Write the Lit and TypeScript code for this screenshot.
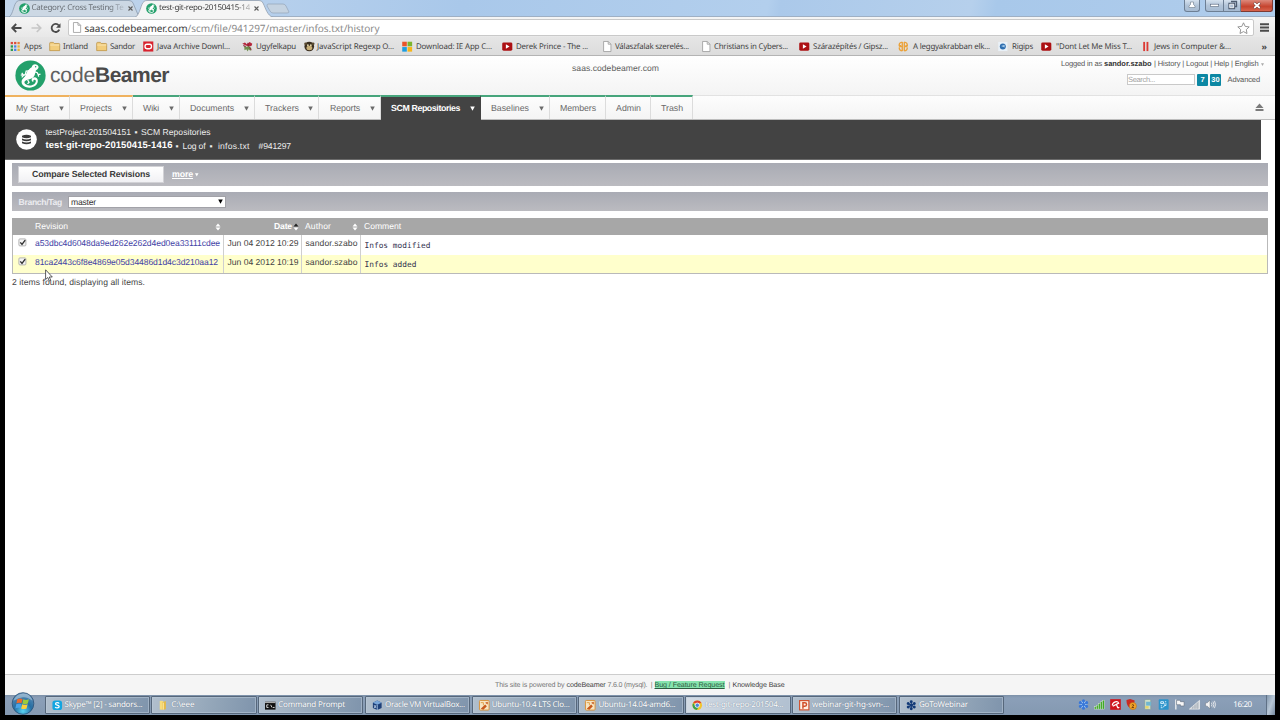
import { LitElement, html, css, svg, nothing } from "lit";
import { customElement, property } from "lit/decorators.js";

/** A label that spreads its letters over a given width, after a given lead. */
@customElement("fit-label")
class FitLabel extends LitElement {
  @property({ type: Number }) w = 0;
  @property({ type: Number }) lead = 0;
  @property() text = "";
  static styles = css`
    :host { display: block; flex: none; white-space: pre; text-rendering: geometricPrecision; }
    span { display: inline-block; text-decoration: inherit; }
  `;
  render() {
    return html`<span>${this.text}</span>`;
  }
  updated() {
    const s = this.renderRoot.querySelector("span") as HTMLElement;
    s.style.letterSpacing = "0px";
    this.style.marginLeft = `${this.lead}px`;
    if (this.w) {
      const width = s.getBoundingClientRect().width;
      s.style.letterSpacing = `${(this.w - width) / this.text.length}px`;
      this.style.width = `${this.w}px`;
    }
  }
}

const t = (lead: number, text: string, w: number, cls = "") =>
  html`<fit-label class=${cls} .lead=${lead} .text=${text} .w=${w}></fit-label>`;

const icon = (w: number, h: number, vb: string, body: unknown, cls = "") =>
  html`<svg class="ic ${cls}" width=${w} height=${h} viewBox=${vb}>${body}</svg>`;

const lizard = svg`
  <circle cx="16" cy="16" r="15.600" fill="#23a06b"/>
  <path d="M17.200 7.500C17.800 4.800 20.500 3.600 23 5.200c1.700 1.100 1.700 3 .4 4.200-1.200 1.100-2.200 1.500-2.400 3.200-.3 2.700-1.200 4.800-3.600 6.300-2.200 1.300-4.900 1.500-6.600 2.400-1.600.9-1.300 2.600.3 3.700 2.600 1.800 6.700 1.600 9.200-.6 1.700-1.600 1.600-3.600.2-3.900-1.300-.2-2 1-1.500 2.300-2.200-.5-2.400-3.400-.6-4.500 2.400-1.400 5.200.1 5.200 3.200 0 4.200-4.200 7.200-8.800 7.100-4.200-.1-8-2.600-8-5.900 0-3.200 2.600-4.300 3.700-6.200 1.500-2.700 2.200-6.100 6.700-9z" fill="#fff"/>
  <path d="M14.500 11.200l-3 .3-.8 3.200-1.800 1.200M8.900 15.900l-2.900-.6M8.900 15.900l-2 2M8.800 15.600L7 13.200M20 12l3 1.200 1 2M24 15.200l2.300-.6M24 15.200l.4 2M13 20.500l1.500 2.500-1.600 1.600" fill="none" stroke="#fff" stroke-width="1.300"/>
  <circle cx="21.300" cy="6.900" r=".8" fill="#23a06b"/>`;

const pageIcon = svg`<path d="M1.500.5h5l3 3v8h-8z" fill="#fff" stroke="#9b9b9b" stroke-width=".9"/><path d="M6.500.5v3h3" fill="none" stroke="#9b9b9b" stroke-width=".9"/>`;
const yt = svg`<rect y="1.500" width="11" height="9" rx="1.500" fill="#ac1013"/><path d="M4 3.600v4.800l4-2.400z" fill="#fff"/>`;
const folder = svg`<path d="M.5 2.500q0-1 1-1h3l1 1.200h5q.9 0 .9.900v6.900h-10.900z" fill="#f2cd7c" stroke="#b98f3f" stroke-width=".8"/><path d="M1 4.400h10" stroke="#fbe7b5"/>`;
const dots = ["#dd4b39", "#dd4b39", "#e8803a", "#2f9a4c", "#4b82e8", "#e8b33a", "#2f9a4c", "#4b82e8", "#e8b33a"];

const bookmarkIcons: Record<string, unknown> = {
  apps: dots.map((c, i) => svg`<rect x=${0.5 + (i % 3) * 3.7} y=${1 + Math.floor(i / 3) * 3.7} width="2.500" height="2.500" fill=${c}/>`),
  folder,
  java: svg`<rect y=".5" width="11" height="11" fill="#d8232f"/><rect x="2" y="3.600" width="7" height="4.800" rx="2" fill="none" stroke="#fff" stroke-width="1.500"/>`,
  ugyfel: svg`<path d="M0 3l3-1.500 2 2 3-2.500 3 2-1 2.500-3 .5-3-1z" fill="#b5283d"/><path d="M2 4.500l2 2 3-1 3 2-1 3.500-2-2-1 2.500-1.500-2.500-2 1z" fill="#6f8f4e"/><path d="M1 5l3 1M6 2l1 4M8 7l2 3" stroke="#8d1f3a"/>`,
  monkey: svg`<circle cx="5.500" cy="6" r="5.300" fill="#3b2f20"/><circle cx="1.500" cy="3" r="1.500" fill="#5a4a30"/><circle cx="9.700" cy="3" r="1.500" fill="#5a4a30"/><ellipse cx="5.600" cy="7.600" rx="3.200" ry="2.400" fill="#c9b078"/><circle cx="4" cy="4.500" r="1" fill="#e8dcae"/><circle cx="7.200" cy="4.500" r="1" fill="#e8dcae"/>`,
  ms: svg`<rect y=".8" width="5" height="5" fill="#e8542a"/><rect x="5.800" y=".8" width="5" height="5" fill="#7cb52c"/><rect y="6.600" width="5" height="5" fill="#1c9de0"/><rect x="5.800" y="6.600" width="5" height="5" fill="#f7b517"/>`,
  yt,
  page: pageIcon,
  orange: svg`<path d="M4.500 1.200C1.500 1.500.9 3 1.100 5h2M6.500 1.200C9.500 1.500 10 3 9.900 5h-2M1.100 7c0 2.500 1.400 3.700 3.400 3.700M9.900 7c0 2.500-1.400 3.700-3.400 3.700M4.400 1v10M6.600 1v10M1 6h3M7 6h3" fill="none" stroke="#eba23a" stroke-width="1.500"/>`,
  rigips: svg`<rect y="1" width="10" height="10" fill="#e9f1f8"/><circle cx="5" cy="6" r="3.300" fill="#2f6fb0"/><path d="M3 5.500l4-1.500v3z" fill="#a9cdea"/>`,
  bars: svg`<rect x="0" y="1" width="2" height="10" fill="#dc3a34"/><rect x="3.600" y="1" width="2" height="10" fill="#dc3a34"/>`,
};

// icon, icon x, label, label x, label width
const bookmarks: [string, number, string, number, number][] = [
  ["apps", 10, "Apps", 24, 18], ["folder", 49, "Intland", 63, 25], ["folder", 96, "Sandor", 110, 25],
  ["java", 143, "Java Archive Downl...", 157, 73], ["ugyfel", 242, "Ugyfelkapu", 256, 40],
  ["monkey", 304, "JavaScript Regexp O...", 317, 77], ["ms", 402, "Download: IE App C...", 416, 76],
  ["yt", 502, "Derek Prince - The ...", 516, 72], ["page", 602, "Válaszfalak szerelés...", 615, 74],
  ["page", 701, "Christians in Cybers...", 714, 74], ["yt", 799, "Szárazépítés / Gipsz...", 813, 75],
  ["orange", 898, "A leggyakrabban elk...", 913, 77], ["rigips", 998, "Rigips", 1012, 21],
  ["yt", 1041, "\"Dont Let Me Miss T...", 1056, 76], ["bars", 1143, "Jews in Computer &...", 1154, 77],
];

// label, width of tab, label lead, label width, has menu, colour of top line
const tabs: [string, number, number, number, boolean, string][] = [
  ["My Start", 65, 11, 33, true, "orange"], ["Projects", 63, 10, 32, true, "orange"],
  ["Wiki", 47, 10, 16, true, "green"], ["Documents", 75, 10, 44, true, "green"],
  ["Trackers", 64, 10, 34, true, "green"], ["Reports", 62, 11, 30, true, "green"],
  ["SCM Repositories", 100, 10, 69, true, "on"], ["Baselines", 69, 10, 38, true, "green"],
  ["Members", 56, 10, 36, false, "green"], ["Admin", 45, 10, 25, false, "green"], ["Trash", 42, 10, 22, false, "green"],
];

const vbox = svg`<path d="M6 .5l5 2.500v6L6 11.500 1 9V3z" fill="#1d3f78"/><path d="M1 3l5 2.500L11 3 6 .5z" fill="#7aa6d8"/><path d="M6 5.500v6" stroke="#a9c6e6"/><path d="M2.500 6l2 3M4.500 6l-2 3" stroke="#c9dcf0"/>`;
const vm = svg`<rect x=".5" y=".5" width="11" height="11" rx="1" fill="#f6e5c4" stroke="#d98b2b"/><path d="M2 10l5-5 2 2-4 4zM7 3l3-1v3z" fill="#c8591c"/><path d="M2 3h3v3" stroke="#e09a3c" fill="none"/>`;
const flower = (c: string) => svg`${[0, 60, 120, 180, 240, 300].map((a) => svg`<g transform="rotate(${a} 6 6)"><path d="M6 6V2.500" stroke=${c} stroke-width="1.200"/><circle cx="6" cy="2" r="1.700" fill=${c}/></g>`)}<circle cx="6" cy="6" r="1.700" fill=${c}/>`;
const tasks: [unknown, string, number, string][] = [
  [svg`<rect x=".5" y=".5" width="11" height="11" rx="3" fill="#12a5e0"/><path d="M8.300 4C7.500 2.800 4 2.600 4 4.500 4 6.400 8.200 5.300 8.200 7.500 8.200 9.600 4.500 9.400 3.600 8" fill="none" stroke="#fff" stroke-width="1.400"/>`, "Skype™ [2] - sandors...", 78, ""],
  [svg`<path d="M2 1h4v10H2z" fill="#f7dc7b"/><path d="M5 2.500l4-1.500v9.500L5 11z" fill="#e6bb45"/><path d="M6 3v8" stroke="#fff3c0"/>`, "C:\\eee", 23, ""],
  [svg`<rect y="2" width="12" height="9" fill="#111"/><rect y="2" width="12" height="1.500" fill="#aaa"/><path d="M4 5.500H2v3h2M5 6v.1M5 8v.1M6.500 5.500l1.500 3M9 8.500h2" stroke="#eee" fill="none"/>`, "Command Prompt", 67, ""],
  [vbox, "Oracle VM VirtualBox...", 80, ""],
  [vm, "Ubuntu-10.4 LTS Clo...", 78, ""],
  [vm, "Ubuntu-14.04-amd6...", 77, ""],
  [svg`<circle cx="6" cy="6" r="5.500" fill="#f2c52e"/><path d="M1.200 3.300A5.500 5.500 0 0 1 10.800 3.300L6 4z" fill="#dd4436"/><path d="M1.200 3.300A5.500 5.500 0 0 0 5.500 11.500L7.500 8 4 7z" fill="#3a9f4c"/><circle cx="6" cy="6" r="2.500" fill="#4a86e0" stroke="#fff" stroke-width=".9"/>`, "test-git-repo-201504...", 78, "active"],
  [svg`<rect x=".7" y=".7" width="10.600" height="10.600" fill="#fdf0e4" stroke="#d2502a" stroke-width="1.300"/><path d="M4.500 10V3.200h2.200a1.900 1.900 0 0 1 0 3.900H4.500" fill="none" stroke="#d2502a" stroke-width="1.700"/>`, "webinar-git-hg-svn-...", 77, ""],
  [flower("#123a78"), "GoToWebinar", 49, ""],
];

const tray = [
  svg`<circle cx="6" cy="6" r="4" fill="#a9cbf2"/>${flower("#3a78d8")}`,
  svg`${[0, 1, 2, 3, 4].map((i) => svg`<rect x=${0.5 + i * 2.2} y=${8.5 - i * 1.8} width="1.800" height=${2.5 + i * 1.8} fill="#3faa22" stroke="#e7f6dd" stroke-width=".4"/>`)}`,
  svg`<rect x=".2" y=".2" width="11.600" height="11.600" fill="#d0141c"/><path d="M2.500 7C3 2.500 8.500 2 9.500 4.500L3 8M7 6l1.500 3.500q1 .3 1.500-.7" stroke="#fff" fill="none" stroke-width="1.300"/>`,
  svg`<path d="M.5 1l4-1 5 1.500L8 9 4 9.500Q.5 7 .5 1z" fill="#c92b23"/><circle cx="7.500" cy="7.700" r="3.900" fill="#f3a52a" stroke="#b96a12" stroke-width=".6"/><path d="M6.300 6.700q1.200-1.300 2.200 0 0 1-2.200 2.700h2.500" stroke="#5c2a08" fill="none" stroke-width=".9"/>`,
  svg`<rect x="3" y=".5" width="6.500" height="11" rx="1" fill="#d0dfc9" stroke="#7d9a9a" stroke-width=".7"/><rect x="4.500" y="3" width="5.500" height="4.200" fill="#6fb6cf"/><rect x="3.600" y="7.700" width="3.600" height="2.700" fill="#e5d46a"/>`,
  svg`<rect x=".8" y=".3" width="10.800" height="11.500" rx="1" fill="#2c94cb"/><path d="M3 3h3v2H3zM7.500 3H9M3 7.500h1.500M6 9q0-2.500 3-2M6.500 5.500h3M3 9.500h2" stroke="#e0f4ff" fill="none"/>`,
  svg`<path d="M2 .5v11" stroke="#f4f4f4" stroke-width="1.400"/><path d="M2.800 1.400h4.200v1.500h4v4.700H7V6.200H2.800z" fill="#f7f7f7" stroke="#596777" stroke-width=".6"/>`,
  svg`<path d="M.5 11L11.500 1.500V11z" fill="#c5cbd1" stroke="#f3f3f3" stroke-width=".8"/><path d="M4 8v3M6.500 6v5M9 4v7" stroke="#929da8" stroke-width=".5"/>`,
  svg`<path d="M.5 4.200h2L5.500 1.200v9.600L2.500 7.800h-2z" fill="#f4f4f4" stroke="#5a6775" stroke-width=".5"/><path d="M7 4q1.300 2 0 4M8.700 2.800q2 3.200 0 6.400M10.300 2q2.500 4 0 8" stroke="#f4f4f4" fill="none" stroke-width=".9"/>`,
];

const tri = icon(5, 5, "0 0 5 5", svg`<path d="M.2.5h4.600L2.500 4.800z" fill="currentColor"/>`, "tri");
const sorter = (up: string, down: string) => icon(6, 8, "0 0 6 8", svg`<path d="M.5 3.400L3 .6l2.500 2.800z" fill=${up}/><path d="M.5 4.600h5L3 7.400z" fill=${down}/>`, "sort");
const check = icon(9, 9, "0 0 9 9", svg`<rect x=".9" y=".9" width="7" height="7" rx="1" fill="#f4f4f4" stroke="#a3a3a3" stroke-width=".8"/><path d="M2.300 4.400l1.700 2 3.200-4.300" fill="none" stroke="#333" stroke-width="1.400"/>`);
const closeX = icon(5, 5, "0 0 5 5", svg`<path d="M.5.5l4 4M4.500.5l-4 4" stroke="#5d5d5d" stroke-width="1.100"/>`, "close");

@customElement("app-root")
class AppRoot extends LitElement {
  static styles = css`
    :host { display: block; width: 1280px; height: 720px; background: #000; overflow: hidden;
      font: 8.600px/12px "Liberation Sans", Arial, sans-serif; color: #555; }
    * { box-sizing: border-box; }
    .ic { display: block; flex: none; overflow: visible; }
    .screen { display: flex; flex-direction: column; width: 1270px; height: 714px; margin-left: 5px; background: #fff; }
    .screen > * { flex: none; }
    .ui { font-family: "Noto Sans", "Open Sans", sans-serif; }
    .row { display: flex; align-items: center; }

    .strip { position: relative; display: flex; height: 17px; border-bottom: 1px solid #9fb0c4;
      background: linear-gradient(100deg, #c2d5ea 0, #b5cfec 22%, #a9c8ea 36%, #b3cfed 60%, #abc9ea 61%, #b6d0ec 76%, #a8c8ea 78%, #b0cdec 100%); }
    .shapes { position: absolute; left: 0; top: 0; }
    .tabtitle { position: relative; display: flex; align-items: center; height: 16px; font-size: 8px; }
    .first { width: 128px; padding-left: 13.500px; color: #6a7076; }
    .second { width: 130px; padding-left: 12.500px; color: #3c3c3c; }
    .first fit-label { -webkit-mask-image: linear-gradient(90deg, #000 84%, #0003); }
    .second fit-label { -webkit-mask-image: linear-gradient(90deg, #000 84%, #0004); }
    .close { margin: 1px 0 0 4px; }
    .winbtns { position: relative; display: flex; margin-left: auto; padding-right: 2px; height: 12px; }
    .wb { display: flex; align-items: center; justify-content: center; height: 11.500px; border: 1px solid #6d7f94; border-top: 0;
      background: linear-gradient(#d6e2ef, #b2c4d8 50%, #a6bbd2); }
    .wb.user { width: 16px; margin-right: 5px; border-radius: 0 0 3px 3px; }
    .wb.min { width: 19px; border-radius: 0 0 0 3px; }
    .wb.max { width: 17px; border-left: 0; }
    .wb.x { width: 32px; border-left: 0; border-radius: 0 0 3px 0; border-color: #7d3a33; background: linear-gradient(#dc8a7c, #c94e3a 50%, #c5452f 60%, #d8644e); }

    .toolbar { height: 20px; background: linear-gradient(#f5f5f5, #e8e8e8); padding-left: 6px; }
    .toolbar .ic { margin-top: 1.500px; }
    .toolbar .fwd { margin-left: 9px; }
    .toolbar .reload { margin-left: 8px; }
    .omni { display: flex; align-items: center; width: 1186px; height: 17px; margin: 1px 0 0 6.500px; padding: 0 3px 0 4px;
      background: #fff; border: 1px solid #c9c9c9; border-radius: 2px; font-size: 10px; color: #8a8a8a; }
    .toolbar .omni .ic { margin-top: 0; }
    .omni .host { color: #3a3a3a; }
    .toolbar .omni .star { margin-left: auto; }
    .toolbar .burger { margin-left: 6px; }

    .bookmarks { height: 19px; background: linear-gradient(#e5e5e5, #dcdcdc); border-bottom: 1px solid #b4b4b4; padding: 1px 0 0 5px; color: #444; font-size: 7.900px; }
    .bm { display: flex; align-items: center; flex: none; }
    .more { margin-left: auto; padding-right: 8px; font-size: 9px; font-weight: 700; }

    .head { display: flex; height: 39px; background: linear-gradient(#fff, #f4f4f4); color: #606060; }
    .logo { display: flex; align-items: center; width: 567px; padding-left: 10px; height: 39px; font-size: 21px; line-height: 24px; color: #606060; }
    .logo .b { font-weight: 700; color: #4a4a4a; }
    .site { padding-top: 6px; }
    .user-area { margin-left: auto; width: 224px; padding: 2px 0 0 10px; font-size: 7.500px; color: #555; }
    .user-area .b { font-weight: 700; color: #333; }
    .uline { display: flex; height: 12px; align-items: center; }
    .sline { display: flex; height: 12px; align-items: center; margin-top: 3.500px; padding-left: 66px; }
    .search { display: flex; align-items: center; width: 68px; height: 11px; border: 1px solid #c9c9c9; background: #fff; color: #a3a3a3; padding-left: 0; overflow: hidden; }
    .cal { display: flex; align-items: center; justify-content: center; width: 11px; height: 12px; margin-left: 2px; background: #0c87a3; color: #fff; border-radius: 1px; font-size: 7.500px; font-weight: 700; }

    .nav { display: flex; height: 25px; border-top: 1px solid #e2e2e2; border-bottom: 1px solid #bdbdbd; background: linear-gradient(#fdfdfd, #f4f4f4); font-size: 8.800px; color: #6a6a6a; }
    .tab { display: flex; align-items: center; height: 24px; margin-top: -1px; padding: 0 5.500px 1px 0; border-top: 2px solid #47a57c; border-right: 1px solid #dcdcdc; }
    .tab .tri { margin-left: auto; margin-top: 1px; color: #6b6b6b; }
    .tab.orange { border-top-color: #efb25f; }
    .tab.on { background: #434343; color: #fff; font-weight: 700; height: 25px; border-right-color: #434343; padding-bottom: 2px; }
    .tab.on .tri { color: #fff; }
    .eject { margin: 7px 11px 0 auto; }

    .crumbs { display: flex; width: 1256px; height: 40px; background: #434343; color: #ececec; padding: 0 0 0 11px; align-items: center; border-bottom: 1px solid #6a6a6a; font-size: 8.600px; }
    .lines { display: flex; flex-direction: column; gap: 2px; margin: -2px 0 0 8.500px; }
    .cl { display: flex; align-items: center; height: 12px; }
    .cl .b { font-weight: 700; color: #fff; font-size: 9.500px; }

    .body { display: flex; flex-direction: column; height: 514px; padding: 3px 7px 0 7px; }
    .bar { display: flex; align-items: center; background: linear-gradient(#a9abb4, #bbbbc0); }
    .actions { height: 23px; padding-left: 6px; }
    .btn { display: flex; align-items: center; width: 146px; height: 17px; padding-bottom: 1px; background: linear-gradient(#fff, #f1f1f4); border: 1px solid #d2d2d6; color: #3a3a3a; font-weight: 700; font-size: 8.800px; }
    .morelink { color: #fff; font-weight: 700; font-size: 8.800px; text-decoration: underline; margin-bottom: 1px; }
    .mtri { margin: 1px 0 0 2px; color: #fff; }
    .branch { height: 19px; margin-top: 6px; color: #ececf0; font-weight: 700; }
    .select { display: flex; align-items: center; width: 158px; height: 12px; margin-left: 6px; background: #fff; border: 1px solid #a2a2a8; color: #333; font-weight: 400; }
    .select .tri { margin: 0 2.500px 0 auto; color: #000; }

    .table { margin-top: 7px; border: 1px solid #b9b9b9; border-top: 0; display: grid; grid-template-rows: 17px 19.500px 18.500px; }
    .tr { display: grid; grid-template-columns: 19px 192px 78px 59px 1fr; background: #fff; color: #444; font-size: 8.600px; }
    .tr.th { background: #a7a7a7; color: #fff; margin: 0 -1px; padding-left: 1px; }
    .tr.hl { background: #ffffcc; }
    .td { display: flex; align-items: center; border-right: 1px solid #cfcfcf; padding-bottom: 3px; }
    .th .td { border-right-color: transparent; padding-bottom: 1px; }
    .td:first-child, .td:last-child { border-right: 0; }
    .td:first-child { padding-left: 4.500px; padding-bottom: 4px; }
    .td .sort { margin: 1px 2.500px 0 auto; }
    .td.date .sort { margin-left: 1px; margin-right: 1px; }
    .date .b { font-weight: 700; }
    .link { color: #4343a6; }
    .mono { font-family: "DejaVu Sans Mono", monospace; font-size: 7.800px; color: #33334f; padding: 2px 0 0; }
    .count { display: flex; margin-top: 2px; color: #444; font-size: 8.600px; }

    .foot { display: flex; height: 21px; border-top: 1.500px solid #cdcdcd; background: #f5f5f5; align-items: center; padding-left: 490px; font-size: 7.100px; color: #777; }
    .foot .dk { color: #444; }
    .foot .gr { background: #86e3ae; color: #2d5c41; text-decoration: underline; height: 8px; line-height: 8px; }

    .task { position: relative; display: flex; height: 19.500px; background: linear-gradient(#7d91a8, #8b9fb8 15%, #8499b1); color: #fff; font-size: 8px; }
    .orb { position: absolute; left: 6px; top: -3px; }
    .buttons { display: flex; margin-left: 39.500px; gap: 1.500px; }
    .tb { display: flex; align-items: center; width: 105.300px; height: 18.500px; margin-top: .5px; padding-left: 6px; border: 1px solid #56677b; border-radius: 1px;
      box-shadow: inset 0 0 0 1px #bccada88; background: linear-gradient(100deg, #b1bfcd, #92a5b8 60%, #7f94ac); text-shadow: 0 0 1px #5c6c80; }
    .tb.active { background: linear-gradient(100deg, #d3dbe4, #bccad8 60%, #b1c0d0); }
    .tray { display: flex; align-items: center; gap: 4.900px; margin-left: 74px; }
    .time { display: flex; align-items: center; }
    .peek { margin-left: auto; width: 9px; border-left: 1px solid #5f7186; background: linear-gradient(110deg, #8398ae, #b8c7d6 50%, #75889e); }

    .cursor { position: absolute; left: 45px; top: 269px; }
  `;

  private chrome() {
    return html`
      <div class="strip ui">
        <svg class="shapes" width="300" height="17" viewBox="0 0 300 17">
          <path d="M4 17C8 15 9 3 12 1.500Q13 .5 15 .5H124Q127 .5 128 3L134 17z" fill="#ccd8e4" stroke="#8c9cae" stroke-width=".8"/>
          <path d="M263 4h15q2 0 3 2l3 6q0 1-2 1h-14q-2 0-3-2l-3-5q0-2 1-2z" fill="#c5d3e1" stroke="#93a4b7" stroke-width=".7"/>
          <path d="M130 17.500C135 15 136 3 139 1.500Q140 .5 142 .5H254Q257 .5 258 3C261 9 262 15 268 17.500z" fill="#f5f5f5" stroke="#93a0ae" stroke-width=".8"/>
        </svg>
        <div class="tabtitle first">${icon(11, 11, "0 0 32 32", lizard)}${t(2, "Category: Cross Testing Te", 92)}${closeX}</div>
        <div class="tabtitle second">${icon(11, 11, "0 0 32 32", lizard)}${t(2.5, "test-git-repo-20150415-14", 91)}${closeX}</div>
        <div class="winbtns">
          <div class="wb user">${icon(8, 6, "0 0 8 6", svg`<path d="M2.500 0h3v2.500L7 4v1.500H1V4l1.500-1.500z" fill="#fff" stroke="#6c7a8a" stroke-width=".6"/>`)}</div>
          <div class="wb min">${icon(9, 4, "0 0 9 4", svg`<rect x=".3" y="1.200" width="8.400" height="2.400" fill="#fff" stroke="#56657a" stroke-width=".6"/>`)}</div>
          <div class="wb max">${icon(9, 8, "0 0 9 8", svg`<path d="M3 .5h5.500v5H6.500M1 2.500h5.500v5H1z" fill="none" stroke="#4e5c70" stroke-width="1.300"/><path d="M1.700 3.200h4v3.500h-4z" fill="none" stroke="#fff" stroke-width=".8"/>`)}</div>
          <div class="wb x">${icon(8, 7, "0 0 8 7", svg`<path d="M1 .8l6 5.400M7 .8L1 6.200" stroke="#61302a" stroke-width="2.600"/><path d="M1.200 1l5.600 5M6.800 1L1.200 6" stroke="#fff" stroke-width="1.700"/>`)}</div>
        </div>
      </div>
      <div class="toolbar row ui">
        ${icon(11, 10, "0 0 11 10", svg`<path d="M10.500 5H1.500M5.200 1L1.300 5l3.900 4" fill="none" stroke="#4a4a4a" stroke-width="1.900"/>`)}
        ${icon(11, 10, "0 0 11 10", svg`<path d="M.5 5h9M5.800 1l3.900 4-3.900 4" fill="none" stroke="#c6c6c6" stroke-width="1.700"/>`, "fwd")}
        ${icon(11, 10, "0 0 11 10", svg`<path d="M8.800 2.500A4 4 0 1 0 9.300 6.600" fill="none" stroke="#4a4a4a" stroke-width="1.800"/><path d="M10.500.2v4.500H6z" fill="#4a4a4a"/>`, "reload")}
        <div class="omni">
          ${icon(9, 11, "1 0 10 12", pageIcon)}
          ${t(3, "saas.codebeamer.com", 103, "host")}${t(0, "/scm/file/941297/master/infos.txt/history", 192)}
          ${icon(13, 12, "0 0 13 12", svg`<path d="M6.500.8l1.700 3.600 4 .5-2.900 2.700.7 3.900-3.500-1.900L3 11.500l.7-3.900L.8 4.900l4-.5z" fill="#fff" stroke="#8a8a8a" stroke-width=".9"/>`, "star")}
        </div>
        ${icon(9, 9, "0 0 9 9", svg`<path d="M0 1.200h9M0 4.500h9M0 7.800h9" stroke="#4a4a4a" stroke-width="1.900"/>`, "burger")}
      </div>
      <div class="bookmarks row ui">
        ${bookmarks.map(([ic, x, label, lx, w], i) => {
          const next = bookmarks[i + 1];
          return html`<div class="bm" style="width:${(next ? next[1] : 1240) - x}px">${icon(11, 11, "0 0 11.500 12", bookmarkIcons[ic])}${t(lx - x - 11, label, w)}</div>`;
        })}
        <div class="more">»</div>
      </div>`;
  }

  private header() {
    return html`
      <div class="head">
        <div class="logo">${icon(31, 31, "0 0 32 32", lizard)}${t(4, "code", 45)}${t(0, "Beamer", 74, "b")}</div>
        <div class="site">${t(0, "saas.codebeamer.com", 87)}</div>
        <div class="user-area">
          <div class="uline">${t(0, "Logged in as", 41)}${t(2, "sandor.szabo", 47.5, "b")}${t(2.5, "| History | Logout | Help | English", 104.5)}
            ${icon(3, 3, "0 0 5 5", svg`<path d="M0 .5h5L2.500 5z" fill="#aaa"/>`, "mtri")}</div>
          <div class="sline"><div class="search">${t(0, "Search...", 27)}</div>
            <div class="cal">7</div><div class="cal">30</div>${t(6.5, "Advanced", 32.5)}</div>
        </div>
      </div>
      <div class="nav">
        ${tabs.map(([label, w, lead, lw, menu, c]) => html`<div class="tab ${c}" style="width:${w}px">${t(lead, label, lw)}${menu ? tri : nothing}</div>`)}
        ${icon(9, 9, "0 0 9 9", svg`<path d="M4.500.5L8.500 5h-8zM.5 6h8v2h-8z" fill="#7b7b7b"/>`, "eject")}
      </div>
      <div class="crumbs">
        ${icon(21, 21, "0 0 21 21", svg`<circle cx="10.500" cy="10.500" r="10.300" fill="#fff"/><path d="M6 6.800q4.500-2.200 9 0v1.500q-4.500 2-9 0zM6 9.400q4.500 2 9 0v1.900q-4.500 2-9 0zM6 12.400q4.500 2 9 0v1.900q-4.500 2-9 0z" fill="#3c3c3c"/>`)}
        <div class="lines">
          <div class="cl">${t(0, "testProject-201504151", 85.5)}${t(3.5, "▪", 4)}${t(2.5, "SCM Repositories", 69.5)}</div>
          <div class="cl">${t(0, "test-git-repo-20150415-1416", 127, "b")}${t(3, "▪", 4)}${t(3, "Log of", 23)}${t(4, "▪", 4)}${t(4.5, "infos.txt", 31.5)}${t(9, "#941297", 32.5)}</div>
        </div>
      </div>`;
  }

  private content() {
    const row = (rev: string, w: number, date: string, msg: string, mw: number, hl: string) => html`
      <div class="tr ${hl}">
        <div class="td">${check}</div>
        <div class="td link">${t(3, rev, w)}</div>
        <div class="td">${t(3.5, date, 71)}</div>
        <div class="td">${t(3.5, "sandor.szabo", 52)}</div>
        <div class="td mono">${t(3.5, msg, mw)}</div>
      </div>`;
    return html`
      <div class="body">
        <div class="bar actions"><div class="btn">${t(13, "Compare Selected Revisions", 118)}</div>${t(8, "more", 21, "morelink")}
          ${icon(3.5, 3.5, "0 0 5 5", svg`<path d="M0 .5h5L2.500 5z" fill="#fff"/>`, "mtri")}</div>
        <div class="bar branch">${t(6.5, "Branch/Tag", 43.5)}<div class="select">${t(2, "master", 25)}${tri}</div></div>
        <div class="table">
          <div class="tr th">
            <div class="td"></div>
            <div class="td">${t(3, "Revision", 33)}${sorter("#fff", "#fff")}</div>
            <div class="td date">${t(50, "Date", 18, "b")}${sorter("#222", "#fff")}</div>
            <div class="td">${t(3, "Author", 26)}${sorter("#fff", "#fff")}</div>
            <div class="td">${t(3, "Comment", 37)}</div>
          </div>
          ${row("a53dbc4d6048da9ed262e262d4ed0ea33111cdee", 185, "Jun 04 2012 10:29", "Infos modified", 66, "")}
          ${row("81ca2443c6f8e4869e05d34486d1d4c3d210aa12", 183, "Jun 04 2012 10:19", "Infos added", 52, "hl")}
        </div>
        <div class="count">${t(0, "2 items found, displaying all items.", 133)}</div>
      </div>
      <div class="foot">${t(0, "This site is powered by", 69.5)}${t(2, "codeBeamer", 39, "dk")}${t(2, "7.6.0 (mysql).  |", 45)}${t(2, "Bug / Feature Request", 70, "gr")}${t(4, "|", 2)}${t(2, "Knowledge Base", 52, "dk")}</div>`;
  }

  private taskbar() {
    return html`
      <div class="task ui">
        <svg class="orb" width="24" height="23" viewBox="0 0 24 24">
          <defs><radialGradient id="g" cx=".5" cy=".85" r=".8"><stop offset="0" stop-color="#59d3f2"/><stop offset=".5" stop-color="#256ea3"/><stop offset="1" stop-color="#5d8db5"/></radialGradient></defs>
          <circle cx="12" cy="12" r="11.300" fill="url(#g)" stroke="#2a4f74" stroke-width=".8"/>
          <path d="M6 7.500q2.800-1.500 5.500-.2l-1 4.400q-2.700-1-5.400.3z" fill="#ee6a2c"/><path d="M12.300 7.600q2.900 1.300 5.900 0l-1.200 4.400q-2.800 1.200-5.700-.1z" fill="#9ccb3b"/>
          <path d="M4.900 12.800q2.700-1.400 5.400-.3l-1 4.300q-2.700-1-5.300.3z" fill="#4aa3e6"/><path d="M11.100 12.700q2.900 1.300 5.700.1l-1.100 4.400q-2.800 1.200-5.600 0z" fill="#fbcf3b"/>
          <path d="M2 9Q5 2 12 1.500T22 9Q16 5 12 5.500T2 9z" fill="#fff" opacity=".35"/>
        </svg>
        <div class="buttons">
          ${tasks.map(([ic, label, w, c]) => html`<div class="tb ${c}">${icon(10.5, 10.5, "0 0 12 12", ic)}${t(2.5, label, w)}</div>`)}
        </div>
        <div class="tray">${tray.map((ic) => icon(11, 11, "0 0 12 12", ic))}</div>
        <div class="time">${t(17, "16:20", 18.5)}</div>
        <div class="peek"></div>
      </div>`;
  }

  render() {
    return html`
      <div class="screen">${this.chrome()}${this.header()}${this.content()}${this.taskbar()}</div>
      <svg class="cursor" width="8" height="13" viewBox="0 0 8 13"><path d="M.6.8v9.700l2.200-2 1.500 3.600 1.500-.7-1.500-3.400h3z" fill="#fff" stroke="#333" stroke-width=".8"/></svg>`;
  }
}
